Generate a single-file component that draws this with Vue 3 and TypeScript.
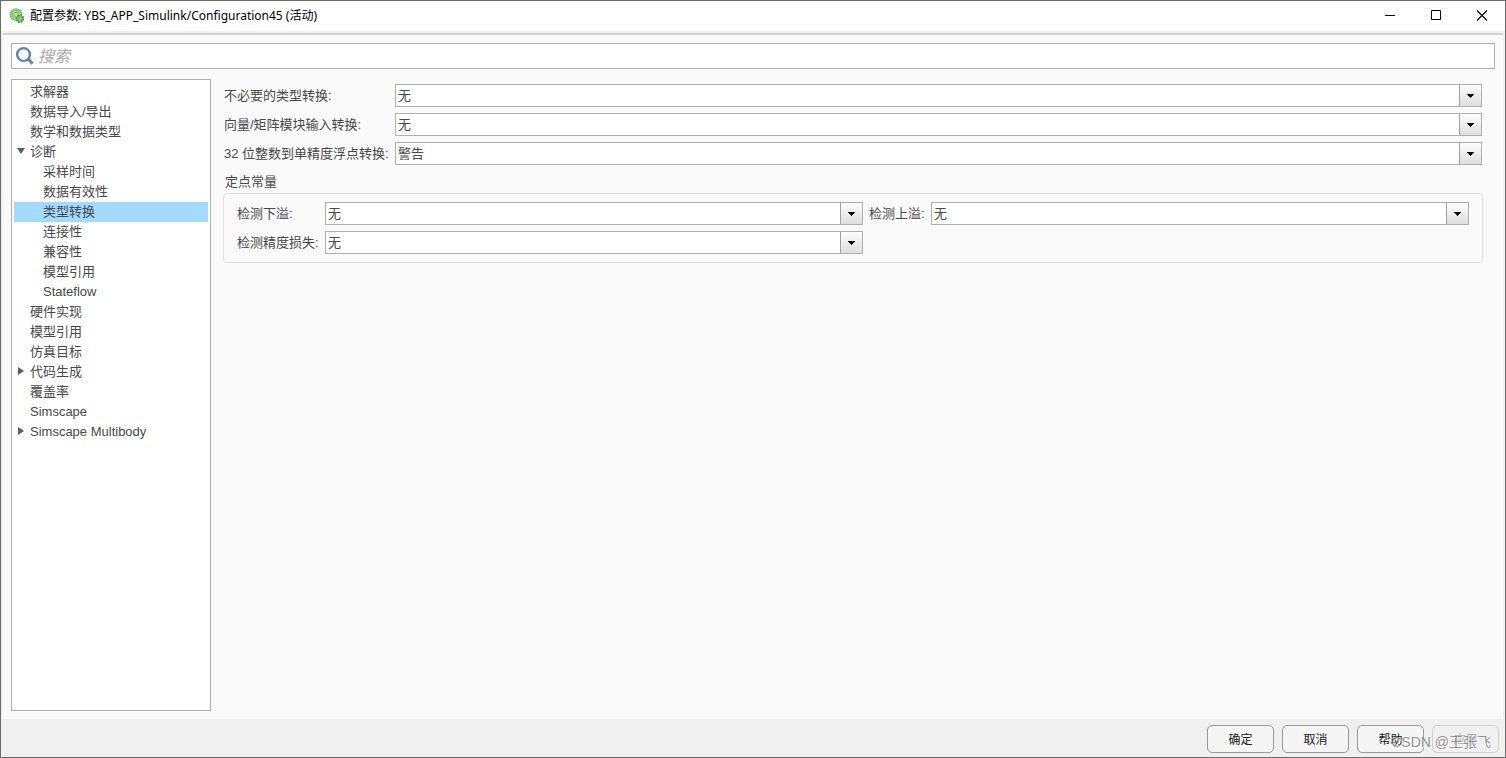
<script setup lang="ts">
import { ref } from 'vue'

interface TreeItem {
  id: string
  label: string
  child?: boolean
  arrow?: 'open' | 'closed'
}

interface Field {
  id: string
  label: string
  value: string
}

const tree: TreeItem[] = [
  { id: 'solver', label: '求解器' },
  { id: 'io', label: '数据导入/导出' },
  { id: 'math', label: '数学和数据类型' },
  { id: 'diag', label: '诊断', arrow: 'open' },
  { id: 'sample', label: '采样时间', child: true },
  { id: 'validity', label: '数据有效性', child: true },
  { id: 'conversion', label: '类型转换', child: true },
  { id: 'connect', label: '连接性', child: true },
  { id: 'compat', label: '兼容性', child: true },
  { id: 'diag-ref', label: '模型引用', child: true },
  { id: 'stateflow', label: 'Stateflow', child: true },
  { id: 'hardware', label: '硬件实现' },
  { id: 'model-ref', label: '模型引用' },
  { id: 'target', label: '仿真目标' },
  { id: 'codegen', label: '代码生成', arrow: 'closed' },
  { id: 'coverage', label: '覆盖率' },
  { id: 'simscape', label: 'Simscape' },
  { id: 'multibody', label: 'Simscape Multibody', arrow: 'closed' },
]

const options = ['无', '警告', '错误']

const mainFields = ref<Field[]>([
  { id: 'unnecessary', label: '不必要的类型转换:', value: '无' },
  { id: 'vector', label: '向量/矩阵模块输入转换:', value: '无' },
  { id: 'int32', label: '32 位整数到单精度浮点转换:', value: '警告' },
])

const constFields = ref<Field[]>([
  { id: 'underflow', label: '检测下溢:', value: '无' },
  { id: 'overflow', label: '检测上溢:', value: '无' },
  { id: 'precision', label: '检测精度损失:', value: '无' },
])

const selected = ref('conversion')
const query = ref('')
</script>

<template>
  <div class="window">
    <header class="titlebar">
      <svg class="app-icon" width="16" height="16" viewBox="0 0 16 16" aria-hidden="true">
        <circle cx="7" cy="6.5" r="5.6" fill="#d3ecc4" stroke="#7cc063" stroke-width="1.4" />
        <path d="M10.5 5.5A3.8 3.8 0 1 0 6.5 10M8.8 6.6A2 2 0 1 0 6.8 8.4" fill="none" stroke="#6fb457" stroke-width="1.1" />
        <circle cx="10.8" cy="10.6" r="3.6" fill="#9bd083" stroke="#55a044" stroke-width="1.8" stroke-dasharray="1.8 1" />
        <circle cx="10.8" cy="10.6" r="2.9" fill="#a5d68e" stroke="#4f9a40" stroke-width="1" />
        <circle cx="10.8" cy="10.6" r="1.3" fill="#f2faee" stroke="#4f9a40" stroke-width="0.8" />
      </svg>
      <h1 class="title">配置参数: YBS_APP_Simulink/Configuration45 (活动)</h1>
      <button class="win-btn" type="button" aria-label="最小化">
        <svg width="12" height="12" viewBox="0 0 12 12"><path d="M1 5.5h10" stroke="#000" /></svg>
      </button>
      <button class="win-btn" type="button" aria-label="最大化">
        <svg width="12" height="12" viewBox="0 0 12 12"><path d="M1.5 .5h9v9h-9z" fill="none" stroke="#000" /></svg>
      </button>
      <button class="win-btn" type="button" aria-label="关闭">
        <svg width="12" height="12" viewBox="0 0 12 12"><path d="M1 .5l10 10M11 .5L1 10.5" stroke="#000" stroke-width="1.1" /></svg>
      </button>
    </header>

    <div class="content">
      <label class="search">
        <svg width="20" height="20" viewBox="0 0 20 20" aria-hidden="true">
          <circle cx="8.5" cy="8.5" r="6.4" fill="#fff" stroke="#5c84b1" stroke-width="2.4" />
          <path d="M13 13l4.6 4.6" stroke="#5c84b1" stroke-width="3" stroke-linecap="butt" />
        </svg>
        <input v-model="query" type="text" placeholder="搜索" aria-label="搜索" />
      </label>

      <div class="panes">
        <nav class="tree" aria-label="配置类别">
          <ul>
            <li v-for="item in tree" :key="item.id">
              <button
                type="button"
                class="node"
                :class="{ child: item.child, selected: selected === item.id }"
                @click="selected = item.id"
              >
                <span class="twisty">
                  <svg v-if="item.arrow === 'open'" width="8" height="8" viewBox="0 0 8 8"><path d="M0 1h8L4 7z" fill="#47617f" /></svg>
                  <svg v-else-if="item.arrow" width="8" height="8" viewBox="0 0 8 8"><path d="M1 0v8l6-4z" fill="#47617f" /></svg>
                </span>
                <span class="node-label">{{ item.label }}</span>
              </button>
            </li>
          </ul>
        </nav>

        <main class="form">
          <div class="rows">
            <template v-for="f in mainFields" :key="f.id">
              <label :for="f.id">{{ f.label }}</label>
              <div class="combo">
                <select :id="f.id" v-model="f.value">
                  <option v-for="o in options" :key="o">{{ o }}</option>
                </select>
                <span class="drop">
                  <svg width="7" height="4" viewBox="0 0 7 4"><path d="M0 0h7v1h-1v1h-1v1h-1v1h-1v-1h-1v-1h-1v-1h-1z" fill="#000" /></svg>
                </span>
              </div>
            </template>
          </div>

          <h2 id="const-title" class="group-title">定点常量</h2>
          <section class="group" aria-labelledby="const-title">
            <template v-for="f in constFields" :key="f.id">
              <label :for="f.id">{{ f.label }}</label>
              <div class="combo">
                <select :id="f.id" v-model="f.value">
                  <option v-for="o in options" :key="o">{{ o }}</option>
                </select>
                <span class="drop">
                  <svg width="7" height="4" viewBox="0 0 7 4"><path d="M0 0h7v1h-1v1h-1v1h-1v1h-1v-1h-1v-1h-1v-1h-1z" fill="#000" /></svg>
                </span>
              </div>
            </template>
          </section>
        </main>
      </div>
    </div>

    <footer class="footer">
      <button type="button">确定</button>
      <button type="button">取消</button>
      <button type="button">帮助</button>
      <button type="button" disabled>应用</button>
      <span class="watermark">CSDN @王张飞</span>
    </footer>
  </div>
</template>

<style>
body {
  margin: 0;
}
</style>

<style scoped>
* {
  box-sizing: border-box;
}

.window {
  display: flex;
  flex-direction: column;
  min-height: 100vh;
  border: 1px solid #6b6b6b;
  background: #f0f0f0;
  color: #484848;
  font-family: "Liberation Sans", "Noto Sans CJK SC", sans-serif;
  font-size: 13px;
  font-weight: 400;
}

button,
input,
select {
  font: inherit;
  color: inherit;
}

.titlebar {
  display: flex;
  align-items: center;
  height: 30px;
  padding-left: 8px;
  background: #fff;
  color: #000;
}

.title {
  flex: 1;
  margin: 0 0 0 5px;
  font: 400 12px/16px "Noto Sans", "Noto Sans CJK SC", sans-serif;
}

.win-btn {
  display: flex;
  align-items: center;
  justify-content: center;
  width: 46px;
  height: 30px;
  padding: 0;
  border: 0;
  background: transparent;
}

.content {
  flex: 1;
  display: flex;
  flex-direction: column;
  gap: 10px;
  margin: 2px 2px 0;
  padding: 8px;
  border-top: 2px solid #d3d3d3;
  background: #fafafa;
}

.search {
  display: flex;
  align-items: center;
  gap: 3px;
  height: 26px;
  padding-left: 3px;
  border: 1px solid #b0b0b0;
  background: #fff;
}

.search input {
  flex: 1;
  min-width: 0;
  padding: 2px 0 0;
  border: 0;
  outline: 0;
  background: transparent;
  font-size: 16px;
  line-height: 22px;
  font-style: italic;
}

.search input::placeholder {
  color: #a9a9a9;
  opacity: 1;
}

.panes {
  flex: 1;
  display: flex;
  gap: 12px;
}

.tree {
  width: 200px;
  padding: 2px;
  border: 1px solid #b0b0b0;
  background: #fff;
}

.tree ul {
  margin: 0;
  padding: 0;
  list-style: none;
}

.node {
  display: flex;
  align-items: center;
  width: 100%;
  height: 20px;
  padding: 0 0 0 3px;
  border: 0;
  background: transparent;
  text-align: left;
  line-height: 20px;
}

.node.child {
  padding-left: 16px;
}

.node.selected {
  background: #a3daff;
}

.twisty {
  display: flex;
  width: 13px;
  padding-bottom: 2px;
}

.form {
  flex: 1;
  min-width: 0;
  padding: 5px 12px 0 0;
}

.rows {
  display: grid;
  grid-template-columns: 171px 1fr;
  row-gap: 6px;
  padding: 0 1px;
}

label {
  white-space: nowrap;
  line-height: 23px;
}

.combo {
  position: relative;
  display: flex;
  height: 23px;
}

.combo select {
  width: 100%;
  padding: 0 24px 0 2px;
  border: 1px solid #b0b0b0;
  border-radius: 0;
  outline: 0;
  background: #fff;
  appearance: none;
}

.drop {
  position: absolute;
  top: 1px;
  right: 1px;
  bottom: 1px;
  display: flex;
  align-items: center;
  justify-content: center;
  width: 22px;
  border-left: 1px solid #a0a0a0;
  background: linear-gradient(#fdfdfd, #dedede);
  pointer-events: none;
}

.group-title {
  margin: 5px 0 0 2px;
  font-size: 13px;
  font-weight: inherit;
  line-height: 23px;
}

.group {
  display: grid;
  grid-template-columns: 88px 1fr 68px 1fr;
  row-gap: 6px;
  padding: 8px 13px;
  border: 1px solid #e0e0e0;
  border-radius: 4px;
}

.group label:nth-of-type(2) {
  padding-left: 6px;
}

.footer {
  position: relative;
  display: flex;
  align-items: flex-start;
  justify-content: flex-end;
  gap: 8px;
  height: 38px;
  padding: 6px 6px 0 0;
}

.footer button {
  width: 67px;
  height: 28px;
  padding: 0 0 1px;
  border: 1px solid #999;
  border-radius: 5px;
  background: #f5f5f5;
  color: #202020;
  font-size: 12px;
}

.footer button:disabled {
  border-color: #d0d0d0;
  background: #f0f0f0;
  color: #b0b0b0;
}

.watermark {
  position: absolute;
  right: 14px;
  bottom: 4px;
  color: rgba(120, 120, 120, 0.8);
  font-size: 14px;
  line-height: 22px;
  text-shadow: 1px 1px 0 rgba(255, 255, 255, 0.7);
  pointer-events: none;
}
</style>
